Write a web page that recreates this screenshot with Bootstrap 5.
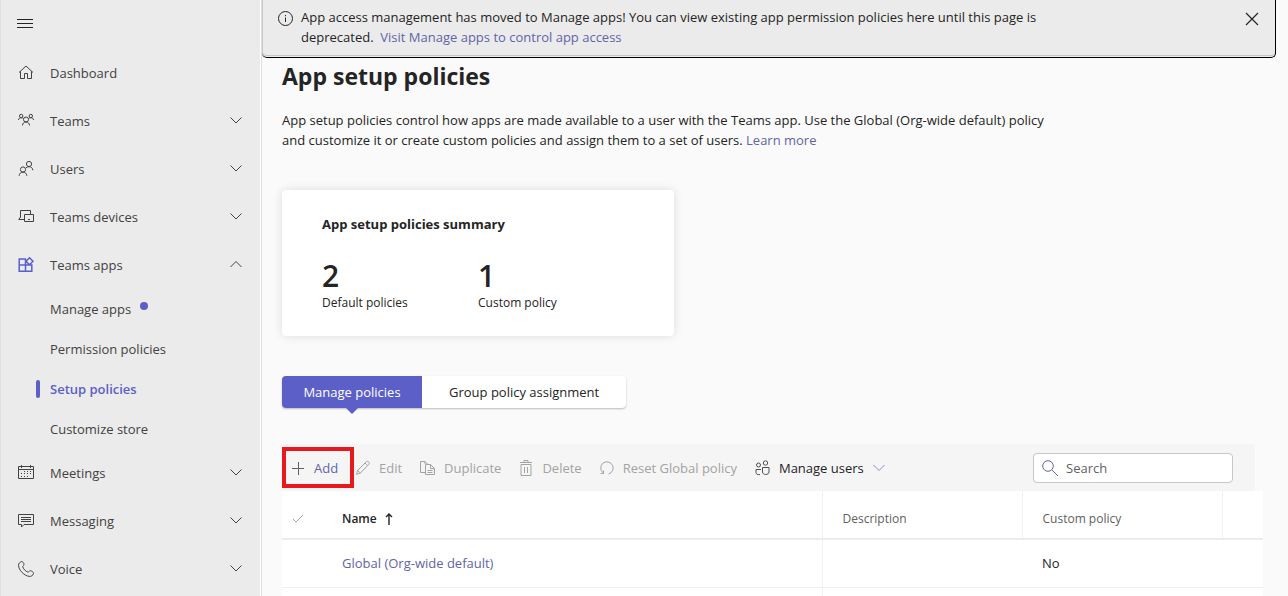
<!DOCTYPE html>
<html lang="en">
<head>
<meta charset="utf-8">
<meta name="viewport" content="width=device-width, initial-scale=1">
<title>App setup policies</title>
<link href="https://cdn.jsdelivr.net/npm/bootstrap@5.3.0/dist/css/bootstrap.min.css" rel="stylesheet">
<style>
  :root { --brand: #5b5fc7; --ink: #242424; --link: #6264a7; }
  body { font-family: "Open Sans", "Noto Sans", sans-serif; font-size: 13px; line-height: 20px; color: var(--ink); background: #fafafa; }
  svg { fill: none; stroke: currentColor; flex-shrink: 0; display: block; }
  a { color: var(--link); text-decoration: none; }
  .app-shell { height: 100vh; }
  .side-nav { width: 262px; background: #ebebeb; color: #424242; border-left: 1px solid #dcdfe3; border-right: 1px solid #dedede; box-shadow: inset -1px 0 #fff; }
  .side-nav .nav-link { color: inherit; height: 48px; padding: 0 19px 0 17px; }
  .side-nav .sub-link { height: 40px; padding: 0 0 0 49px; }
  .side-nav .sub-link.active { color: var(--brand); font-weight: 600; }
  .side-nav .sub-link.active::before { content: ""; width: 4px; height: 18px; border-radius: 2px; background: var(--brand); margin: 0 10px 0 -14px; }
  .menu-btn { height: 49px; padding: 0 16px; color: #242424; }
  .new-dot { width: 8px; height: 8px; border-radius: 50%; background: var(--brand); margin: 0 0 6px 9px; }
  .notice { background: #ebebeb; margin-right: 12px; padding: 7px 15px 10px 16px; border: solid #000; border-width: 0 1px 1px 0; border-radius: 0 0 5px 5px; box-shadow: inset 0 -1px #ebebeb, inset 0 -2px #c8c8c8, inset 1px 0 #c8c8c8; }
  .notice-text { max-width: 770px; }
  .page-body { padding: 0 25px 0 20px; }
  h1 { font-size: 23px; line-height: 32px; font-weight: 700; margin: 2px 0 18px; }
  .intro { max-width: 784px; margin-bottom: 40px; }
  .summary { max-width: 392px; background: #fff; border-radius: 4px; padding: 24px 40px; box-shadow: 0 0 10px rgba(0,0,0,.12); margin-bottom: 40px; }
  .summary h2 { font-size: 13px; line-height: 20px; font-weight: 700; margin-bottom: 24px; }
  .figure-num { font-size: 30px; line-height: 36px; font-weight: 600; }
  .figure-label { font-size: 12px; line-height: 18px; }
  .tab-set { box-shadow: 0 1px 2px rgba(0,0,0,.25); border-radius: 4px; background: #fff; margin-bottom: 36px; }
  .tab-set button { height: 32px; border: 0; background: transparent; padding: 0 27px; color: var(--ink); }
  .tab-set button.active { background: var(--brand); color: #fff; border-radius: 4px 0 0 4px; width: 140px; padding: 0; position: relative; }
  .tab-set button.active::after { content: ""; position: absolute; top: 100%; left: 50%; margin-left: -6px; border: 6px solid transparent; border-bottom: 0; border-top-color: var(--brand); }
  .tool-row { background: #f5f5f5; height: 47px; margin-right: 8px; padding: 0 22px 0 0; border-radius: 0 4px 0 0; }
  .tool-row button { border: 0; background: transparent; padding: 0; display: flex; align-items: center; gap: 9px; color: var(--ink); white-space: nowrap; height: 41px; margin-right: 18px; }
  .tool-row button:disabled { color: #a3a3a3; }
  .tool-row .add-btn { border: 4px solid #e8191c; width: 72px; padding: 0 6px 0 5px; margin-right: 2px; color: var(--link); }
  .search-box { width: 200px; height: 30px; background: #fff; border: 1px solid #c7c7c7; border-radius: 4px; padding: 0 8px; color: #6264a7; }
  .search-box input { border: 0; outline: 0; background: transparent; min-width: 0; padding: 0; color: #424242; }
  .search-box input::placeholder { color: #616161; }
  .policy-table { table-layout: fixed; width: 100%; background: #fff; }
  .policy-table th { height: 48px; padding: 9px 0 0 20px; font-size: 12px; font-weight: 400; color: #616161; border-bottom: 2px solid #ececec; }
  .policy-table td { height: 48px; padding: 0 0 0 20px; border-bottom: 1px solid #f0f0f0; }
  .policy-table th + th + th { border-left: 1px solid #f0f0f0; }
  .policy-table td:nth-child(3) { border-left: 1px solid #f0f0f0; }
  .policy-table th:first-child { padding-left: 10px; }
  .policy-table .sorted { font-weight: 600; color: var(--ink); }
</style>
</head>
<body>
<div class="app-shell d-flex overflow-hidden">
  <aside class="side-nav flex-shrink-0 overflow-hidden">
    <button class="menu-btn btn border-0 rounded-0 d-flex align-items-center" type="button" aria-label="Menu">
      <svg width="16" height="16" viewBox="0 0 16 16" shape-rendering="crispEdges"><path d="M0 2.500h16M0 6.500h16M0 10.500h16"/></svg>
    </button>
    <nav class="nav flex-column flex-nowrap">
      <a class="nav-link d-flex align-items-center gap-3" href="#">
        <svg width="16" height="16" viewBox="0 0 16 16"><path d="M1 7.500 8 1 15 7.500M2.500 6.300V13.500h4V8.500h3v5h4V6.300"/></svg>Dashboard</a>
      <a class="nav-link d-flex align-items-center gap-3" href="#">
        <svg width="16" height="16" viewBox="0 0 16 16"><circle cx="3.200" cy="3" r="1.700"/><circle cx="12.800" cy="3" r="1.700"/><circle cx="8" cy="6.500" r="2.500"/><path d="M.5 7C.6 5.500 1.600 4.700 3.200 4.700c1 0 1.700.3 2.300 1M15.500 7c-.1-1.500-1.100-2.300-2.700-2.300-1 0-1.700.3-2.300 1M4.500 12.500C4.600 10.300 6 9 8 9s3.400 1.300 3.500 3.500"/></svg>Teams
        <svg class="ms-auto" width="12" height="12" viewBox="0 0 12 12"><path d="m.5 2.500 5.500 5.500L11.500 2.500"/></svg></a>
      <a class="nav-link d-flex align-items-center gap-3" href="#">
        <svg width="16" height="16" viewBox="0 0 16 16"><circle cx="11" cy="3" r="2.600"/><circle cx="5" cy="8.500" r="2.600"/><path d="M1.200 14.800c0-2.200 1.500-3.600 3.800-3.600s3.800 1.400 3.800 3.600M7.900 7C8.700 6.100 9.700 5.700 11 5.700c2.300 0 3.700 1.400 3.800 3.600"/></svg>Users
        <svg class="ms-auto" width="12" height="12" viewBox="0 0 12 12"><path d="m.5 2.500 5.500 5.500L11.500 2.500"/></svg></a>
      <a class="nav-link d-flex align-items-center gap-3" href="#">
        <svg width="16" height="16" viewBox="0 0 16 16"><path d="M2.500 8.500v-7h10V5M2.500 8 .7 10.500h5.800M6.500 5.500h9v7h-9zM10 10.500h2"/></svg>Teams devices
        <svg class="ms-auto" width="12" height="12" viewBox="0 0 12 12"><path d="m.5 2.500 5.500 5.500L11.500 2.500"/></svg></a>
      <a class="nav-link d-flex align-items-center gap-3" href="#" aria-expanded="true">
        <svg width="16" height="16" viewBox="0 0 16 16" stroke-width="1.500" style="stroke:var(--brand)"><path d="M8 2H1.200v12.300h12.600V8H1.200M7.500 2v12.300M11.500.8l3.500 3.500-3.500 3.500L8 4.300z"/></svg>Teams apps
        <svg class="ms-auto" width="12" height="12" viewBox="0 0 12 12"><path d="M.5 8 6 2.500l5.500 5.500"/></svg></a>
      <a class="nav-link sub-link d-flex align-items-center" href="#">Manage apps<span class="new-dot"></span></a>
      <a class="nav-link sub-link d-flex align-items-center" href="#">Permission policies</a>
      <a class="nav-link sub-link active d-flex align-items-center" href="#" aria-current="page">Setup policies</a>
      <a class="nav-link sub-link d-flex align-items-center" href="#">Customize store</a>
      <a class="nav-link d-flex align-items-center gap-3" href="#">
        <svg width="16" height="16" viewBox="0 0 16 16"><path d="M.5 1.500h15v12H.5zM.5 4.500h15M3.500 0v3M12.500 0v3"/><path stroke-dasharray="1 2" d="M6 6.500h8M3 8.500h11M3 11.500h9"/></svg>Meetings
        <svg class="ms-auto" width="12" height="12" viewBox="0 0 12 12"><path d="m.5 2.500 5.500 5.500L11.500 2.500"/></svg></a>
      <a class="nav-link d-flex align-items-center gap-3" href="#">
        <svg width="16" height="16" viewBox="0 0 16 16"><path d="M.5 1.500h15v10H6L3.500 14v-2.500h-3zM3 4.500h10M3 6.500h10M3 8.500h10"/></svg>Messaging
        <svg class="ms-auto" width="12" height="12" viewBox="0 0 12 12"><path d="m.5 2.500 5.500 5.500L11.500 2.500"/></svg></a>
      <a class="nav-link d-flex align-items-center gap-3" href="#">
        <svg width="16" height="16" viewBox="0 0 16 16"><path d="M3.300.6C4.500 0 6.200 2.500 6 3.700 5.800 4.700 4.500 4.800 4.800 5.900c.5 2 2.900 4.600 5 5.100 1.300.3 1.400-1.300 2.600-1.300 1.300 0 3.400 1.700 3.100 2.900-.5 1.800-2.200 3-4.200 2.800C6.200 14.900.6 9 .5 4.300.5 2.600 1.800 1.200 3.300.6z"/></svg>Voice
        <svg class="ms-auto" width="12" height="12" viewBox="0 0 12 12"><path d="m.5 2.500 5.500 5.500L11.500 2.500"/></svg></a>
    </nav>
  </aside>

  <main class="flex-grow-1 overflow-hidden">
    <div class="notice d-flex align-items-start" role="status">
      <svg class="mt-1 me-2" width="15" height="15" viewBox="0 0 15 15"><circle cx="7.500" cy="7.500" r="7"/><path d="M7.500 6.500v4.500M7.500 4v1.200"/></svg>
      <div class="notice-text">App access management has moved to Manage apps! You can view existing app permission policies here until this page is deprecated. &nbsp;<a href="#">Visit Manage apps to control app access</a></div>
      <button class="btn p-0 border-0 ms-auto mt-1" type="button" aria-label="Close"><svg width="16" height="16" viewBox="0 0 16 16" stroke-width="1.200"><path d="m2 2 12 12M14 2 2 14"/></svg></button>
    </div>
    <div class="page-body">
      <h1>App setup policies</h1>
      <p class="intro">App setup policies control how apps are made available to a user with the Teams app. Use the Global (Org-wide default) policy and customize it or create custom policies and assign them to a set of users. <a href="#">Learn more</a></p>
      <section class="summary">
        <h2>App setup policies summary</h2>
        <div class="row g-0">
          <div class="col-6"><div class="figure-num">2</div><div class="figure-label">Default policies</div></div>
          <div class="col-6"><div class="figure-num">1</div><div class="figure-label">Custom policy</div></div>
        </div>
      </section>
      <div class="tab-set d-inline-flex" role="tablist">
        <button class="active" type="button" role="tab" aria-selected="true">Manage policies</button>
        <button type="button" role="tab" aria-selected="false">Group policy assignment</button>
      </div>
      <div class="tool-row d-flex align-items-center">
        <button class="add-btn" type="button"><svg width="14" height="14" viewBox="0 0 14 14" style="stroke:#616161"><path d="M1 7.500h12M7.500 1v13"/></svg>Add</button>
        <button type="button" disabled><svg width="14" height="16" viewBox="0 0 14 16"><path d="m.6 14.400 1-4L10.200 1.800c1.800-1.500 4 .7 2.600 2.600L4.400 13zM9 3l2.700 2.700M1.600 10.400 4.400 13"/></svg>Edit</button>
        <button type="button" disabled><svg width="15" height="16" viewBox="0 0 15 16"><path d="M5 12.500H.5v-11H5L7.500 4M5.500 4.500h5l4 4v6h-9zM10.500 4.500v4h4M7.500 10.500h5M7.500 12.500h5M5 1.500V4"/></svg>Duplicate</button>
        <button type="button" disabled><svg width="14" height="16" viewBox="0 0 14 16"><path d="M1 2.500h12M5 2V.5h4V2M2 4.500h10v11H2zM5.500 7v6M8.500 7v6"/></svg>Delete</button>
        <button type="button" disabled><svg width="14" height="14" viewBox="0 0 14 14"><path d="M3 11.800A6.200 6.200 0 1 1 8.500 13M.5 12.500h3V9.500"/></svg>Reset Global policy</button>
        <button type="button"><svg width="15" height="16" viewBox="0 0 15 16" style="stroke:#505050"><circle cx="10.500" cy="3" r="2.200"/><circle cx="3.500" cy="5" r="2"/><path d="M7.500 7.500h6.500v4.500c0 3.300-6.500 3.300-6.500 0zM6 9.500H1v3c0 1.500 1.500 2.500 4 2"/></svg>Manage users<svg width="12" height="12" viewBox="0 0 12 12" style="stroke:#8b8cc7"><path d="m.5 3 5.500 5.500L11.500 3"/></svg></button>
        <label class="search-box d-flex align-items-center ms-auto gap-2"><svg width="16" height="16" viewBox="0 0 16 16"><circle cx="6" cy="6" r="5.300"/><path d="m10 10 6 6"/></svg><input class="flex-grow-1" type="search" placeholder="Search" aria-label="Search"></label>
      </div>
      <table class="policy-table">
        <colgroup><col style="width:40px"><col><col style="width:200px"><col style="width:200px"><col style="width:41px"></colgroup>
        <thead><tr>
          <th scope="col" aria-label="Select"><svg width="12" height="10" viewBox="0 0 12 10" style="stroke:#a8a8a8"><path d="m1 5 3 3 7-7"/></svg></th>
          <th class="sorted" scope="col"><span class="d-flex align-items-center gap-2">Name <svg width="8" height="12" viewBox="0 0 8 12" stroke-width="1.400"><path d="M4 12V1M1 4l3-3 3 3"/></svg></span></th>
          <th scope="col">Description</th><th scope="col">Custom policy</th><th scope="col" aria-label="Settings"></th>
        </tr></thead>
        <tbody>
          <tr><td></td><td><a href="#">Global (Org-wide default)</a></td><td></td><td>No</td><td></td></tr>
          <tr><td></td><td></td><td></td><td></td><td></td></tr>
        </tbody>
      </table>
    </div>
  </main>
</div>
<script src="https://cdn.jsdelivr.net/npm/bootstrap@5.3.0/dist/js/bootstrap.bundle.min.js"></script>
</body>
</html>
